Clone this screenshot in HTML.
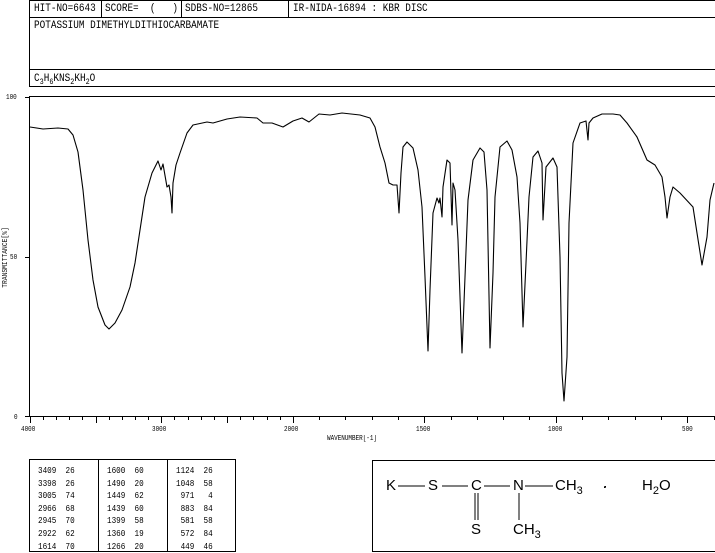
<!DOCTYPE html>
<html><head><meta charset="utf-8"><style>
body{margin:0;width:715px;height:553px;background:#fff;position:relative;overflow:hidden;font-family:"Liberation Mono","DejaVu Sans Mono",monospace;color:#000}
.t{position:absolute;font-size:11px;line-height:11px;white-space:pre;transform:scaleX(0.85);transform-origin:left top}
</style></head><body>
<svg width="715" height="553" style="position:absolute;left:0;top:0" shape-rendering="crispEdges">
<g fill="none" stroke="#000" stroke-width="1">
<rect x="29.5" y="0.5" width="690" height="86"/>
<line x1="29" y1="17.5" x2="715" y2="17.5"/>
<line x1="29" y1="69.5" x2="715" y2="69.5"/>
<line x1="101.5" y1="0" x2="101.5" y2="17"/>
<line x1="181.5" y1="0" x2="181.5" y2="17"/>
<line x1="288.5" y1="0" x2="288.5" y2="17"/>
<rect x="29.5" y="96.5" width="690" height="320"/>
<line x1="25" y1="97.5" x2="29" y2="97.5"/>
<line x1="25" y1="257.5" x2="29" y2="257.5"/>
<line x1="25" y1="416.5" x2="29" y2="416.5"/>
<rect x="29.5" y="459.5" width="206" height="92"/>
<line x1="98.5" y1="460" x2="98.5" y2="552"/>
<line x1="167.5" y1="460" x2="167.5" y2="552"/>
<rect x="372.5" y="460.5" width="350" height="91"/>
</g>
<g id="ticks" stroke="#000"></g>
<polyline fill="none" stroke="#000" stroke-width="1.1" shape-rendering="auto" stroke-linejoin="round" points="30,127 43,129 58,128 68,129 73,135 78,152 83,190 88,240 93,280 98,307 105,325 109,329 115,323 122,310 130,287 135,263 140,230 145,197 152,173 158,161 161,170 163,164 167,187 169,185 171,197 172,213 173,183 176,165 180,153 187,133 193,125 207,122 213,123 227,119 240,117 257,118 263,123 272,123 283,127 293,121 302,118 309,122 319,114 330,115 342,113 360,115 370,118 375,127 380,147 385,163 389,183 393,185 397,185 399,213 401,173 403,147 407,142 413,148 418,170 422,207 425,277 428,351 430,290 433,213 437,198 439,203 440,198 442,217 443,187 447,160 450,163 452,225 453,183 455,190 458,240 462,353 465,277 468,200 473,160 480,148 484,152 487,190 490,348 493,273 495,197 500,147 507,141 512,150 517,177 520,223 523,327 526,263 529,197 533,157 538,151 542,163 543,220 546,167 553,158 557,167 560,257 562,373 564,401 567,357 569,223 573,143 580,123 586,121 588,140 589,123 593,118 602,114 613,114 620,115 627,123 637,137 647,160 655,165 662,177 665,197 667,218 670,197 673,187 680,193 693,207 697,233 702,265 707,237 710,200 714,183"/>
<g stroke="#000" fill="none" shape-rendering="auto">
<line x1="398" y1="486" x2="425" y2="486"/>
<line x1="442" y1="486" x2="468" y2="486"/>
<line x1="484" y1="486" x2="510" y2="486"/>
<line x1="525" y1="486" x2="553" y2="486"/>
<line x1="475" y1="493" x2="475" y2="520"/><line x1="478" y1="493" x2="478" y2="520"/>
<line x1="519" y1="493" x2="519" y2="520"/>
</g>
<circle cx="605" cy="487" r="1" fill="#000"/>
</svg>
<script>
var g=document.getElementById('ticks'),s='';
function X(w){return w>=2000?29.7+(4000-w)*0.1316:292.7+(2000-w)*0.263;}
for(var w=4000;w>=400;w-=100){var x=Math.round(X(w))+0.5;var big=w%500==0;s+='<line x1="'+x+'" y1="417" x2="'+x+'" y2="'+(big?423:420)+'"/>';}
g.innerHTML=s;
</script>
<div class="t" style="left:34px;top:4px">HIT-NO=6643</div>
<div class="t" style="left:105px;top:4px">SCORE=  (   )</div>
<div class="t" style="left:185px;top:4px">SDBS-NO=12865</div>
<div class="t" style="left:293px;top:4px">IR-NIDA-16894 : KBR DISC</div>
<div class="t" style="left:34px;top:21px">POTASSIUM DIMETHYLDITHIOCARBAMATE</div>
<div class="t" style="left:34px;top:74px">C<sub style="font-size:8px">3</sub>H<sub style="font-size:8px">6</sub>KNS<sub style="font-size:8px">2</sub>KH<sub style="font-size:8px">2</sub>O</div>
<div class="t" style="left:6px;top:93px;font-size:7px">100</div>
<div class="t" style="left:10px;top:253px;font-size:7px">50</div>
<div class="t" style="left:14px;top:413px;font-size:7px">0</div>
<div class="t" style="left:-27px;top:252px;font-size:7px;transform:rotate(-90deg) scaleX(0.9);transform-origin:center">TRANSMITTANCE[%]</div>
<div class="t" style="left:21px;top:425px;font-size:7px">4000</div>
<div class="t" style="left:152px;top:425px;font-size:7px">3000</div>
<div class="t" style="left:284px;top:425px;font-size:7px">2000</div>
<div class="t" style="left:416px;top:425px;font-size:7px">1500</div>
<div class="t" style="left:548px;top:425px;font-size:7px">1000</div>
<div class="t" style="left:682px;top:425px;font-size:7px">500</div>
<div class="t" style="left:327px;top:434px;font-size:7px">WAVENUMBER[-1]</div>
<div class="t" style="left:38px;top:465px;font-size:9px;line-height:12.6px">3409  26
3398  26
3005  74
2966  68
2945  70
2922  62
1614  70</div>
<div class="t" style="left:107px;top:465px;font-size:9px;line-height:12.6px">1600  60
1490  20
1449  62
1439  60
1399  58
1360  19
1266  20</div>
<div class="t" style="left:176px;top:465px;font-size:9px;line-height:12.6px">1124  26
1048  58
 971   4
 883  84
 581  58
 572  84
 449  46</div>
<div style="position:absolute;left:386px;top:478px;font-family:'Liberation Sans',sans-serif;font-size:15px;line-height:16px">K</div>
<div style="position:absolute;left:428px;top:478px;font-family:'Liberation Sans',sans-serif;font-size:15px;line-height:16px">S</div>
<div style="position:absolute;left:471px;top:478px;font-family:'Liberation Sans',sans-serif;font-size:15px;line-height:16px">C</div>
<div style="position:absolute;left:513px;top:478px;font-family:'Liberation Sans',sans-serif;font-size:15px;line-height:16px">N</div>
<div style="position:absolute;left:555px;top:478px;font-family:'Liberation Sans',sans-serif;font-size:15px;line-height:16px">CH<sub style="font-size:11px">3</sub></div>
<div style="position:absolute;left:642px;top:478px;font-family:'Liberation Sans',sans-serif;font-size:15px;line-height:16px">H<sub style="font-size:11px">2</sub>O</div>
<div style="position:absolute;left:471px;top:522px;font-family:'Liberation Sans',sans-serif;font-size:15px;line-height:16px">S</div>
<div style="position:absolute;left:513px;top:522px;font-family:'Liberation Sans',sans-serif;font-size:15px;line-height:16px">CH<sub style="font-size:11px">3</sub></div>
</body></html>
